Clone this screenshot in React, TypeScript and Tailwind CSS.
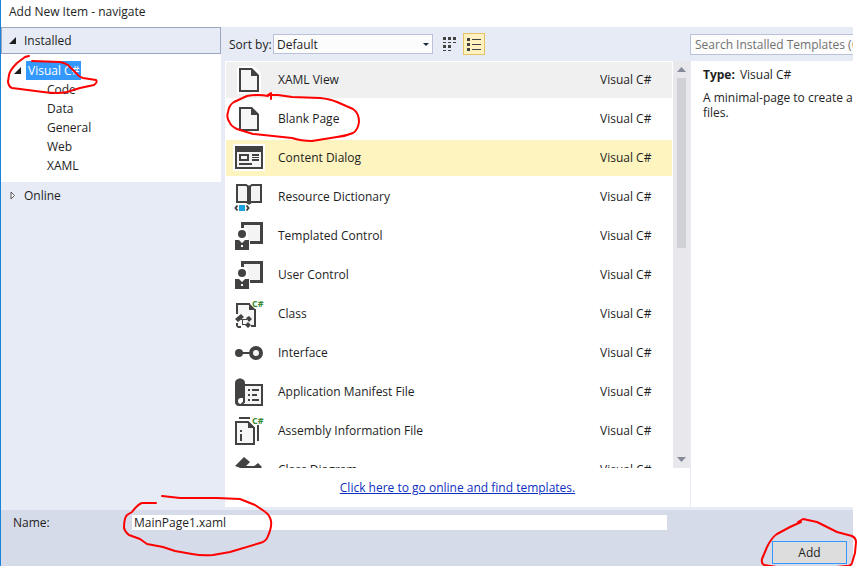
import React from 'react';

const ink = '#424242';

function PageIcon() {
  return (
    <svg width="32" height="32" viewBox="0 0 32 32" aria-hidden="true">
      <path d="M6 2h15l7 7v21H4V4z" fill="#fff" />
      <path d="M7 5h11.500L25 11.500V27H7z" fill="#f6f6f6" stroke={ink} strokeWidth="2" />
      <path d="M18 4l8 8h-8z" fill={ink} />
    </svg>
  );
}

function DialogIcon() {
  return (
    <svg width="32" height="32" viewBox="0 0 32 32" aria-hidden="true">
      <path d="M0 2h32v27H0z" fill="#fff" />
      <path d="M2 4h28v23H2z" fill={ink} />
      <path d="M4 10h24v15H4z" fill="#f4f4f4" />
      <path d="M6 12h10v7H6z" fill={ink} />
      <path d="M8 14h6v3H8z" fill="#f4f4f4" />
      <path d="M19 12h7v2h-7zM19 15h7v1h-7zM19 17h7v2h-7zM6 21h13v2H6z" fill={ink} />
    </svg>
  );
}

function DictionaryIcon() {
  return (
    <svg width="32" height="32" viewBox="0 0 32 32" aria-hidden="true">
      <path d="M4 4h9l3 2 3-2h9v17h-9l-3 1-3-1H4z" fill="#f4f4f4" stroke={ink} strokeWidth="2" />
      <path d="M14 4l2 1 2-1v18l-2 2-2-2z" fill={ink} />
      <path d="M0 23h19v9H0z" fill="#fff" />
      <path d="M14 22h4l-2 2z" fill={ink} />
      <path d="M4.500 24.500L2.500 27l2 2.500M13.500 24.500l2 2.500-2 2.500" fill="none" stroke={ink} strokeWidth="2" />
      <path d="M6 24h6v6H6z" fill="#1ba1e2" />
    </svg>
  );
}

function ControlIcon() {
  return (
    <svg width="32" height="32" viewBox="0 0 32 32" aria-hidden="true">
      <path d="M8 2h22v22H17v-3h10V5H11v3H8z" fill={ink} />
      <path d="M11 5h16v16H15V10l-4-2z" fill="#f4f4f4" />
      <circle cx="9" cy="14" r="6" fill="#fff" />
      <circle cx="9" cy="14" r="4" fill={ink} />
      <path d="M2 20h4l3 3 3-3h4v10H2z" fill={ink} />
      <path d="M8 25h2v2H8z" fill="#fff" />
    </svg>
  );
}

function SharpMark() {
  return (
    <text x="19" y="9" fill="#388a34" className="font-['Open_Sans',sans-serif] text-[9px] font-bold">C#</text>
  );
}

function ClassIcon() {
  return (
    <svg width="32" height="32" viewBox="0 0 32 32" className="overflow-visible" aria-hidden="true">
      <path d="M4 6h13l5 5v17H4z" fill="#f6f6f6" />
      <path d="M4 16V6h13M22 11v17h-4" fill="none" stroke={ink} strokeWidth="2" />
      <path d="M16 5l7 7h-7z" fill={ink} />
      <path d="M2 21l6-5 3 3-6 5zM13 20l3-2 3 3-3 3zM12 27l3-3 3 3-3 3zM3 25v3l2 2h3v-2H5v-3z" fill={ink} />
      <path d="M8 21.500h6M9.500 21v6M9 26.500h4" fill="none" stroke={ink} strokeWidth="1" />
      <SharpMark />
    </svg>
  );
}

function InterfaceIcon() {
  return (
    <svg width="32" height="32" viewBox="0 0 32 32" aria-hidden="true">
      <circle cx="6" cy="16" r="4" fill={ink} />
      <path d="M9 16h8" stroke={ink} strokeWidth="2" />
      <circle cx="23" cy="16" r="5" fill="#f8f8f8" stroke={ink} strokeWidth="4" />
    </svg>
  );
}

function ManifestIcon() {
  return (
    <svg width="32" height="32" viewBox="0 0 32 32" aria-hidden="true">
      <path d="M11 9h18v20H8z" fill="#f4f4f4" stroke={ink} strokeWidth="2" />
      <path d="M2 7c0-6 10-6 10 0v16L8 30H6c-3 0-4-2-4-4z" fill={ink} />
      <circle cx="8" cy="25" r="3" fill="#fff" />
      <path d="M8 22h3v6H8z" fill="#fff" />
      <path d="M11 22v4l-3 3" fill="none" stroke={ink} strokeWidth="2" />
      <path d="M15 13h2v2h-2zM19 13h7v2h-7zM15 18h2v2h-2zM19 18h5v2h-5zM15 23h2v2h-2zM19 23h7v2h-7z" fill={ink} />
    </svg>
  );
}

function AssemblyIcon() {
  return (
    <svg width="32" height="32" viewBox="0 0 32 32" className="overflow-visible" aria-hidden="true">
      <path d="M3 7h12l6 6v16H3z" fill="#f6f6f6" stroke={ink} strokeWidth="2" />
      <path d="M15 6v7h7zM6 2h11v2H6zM24 10h2v16h-2z" fill={ink} />
      <path d="M7 15h2v2H7zM7 19h2v7H7z" fill={ink} />
      <SharpMark />
    </svg>
  );
}

function DiagramIcon() {
  return (
    <svg width="32" height="32" viewBox="0 0 32 32" aria-hidden="true">
      <path d="M2 12l9-9 6 5-7 7z" fill={ink} />
      <path d="M10 12h14v2H10zM20 13l5-4 4 4-4 4z" fill={ink} />
    </svg>
  );
}

const templates = [
  { name: 'XAML View', icon: PageIcon, tone: 'bg-[#f0f0f0]' },
  { name: 'Blank Page', icon: PageIcon, tone: '' },
  { name: 'Content Dialog', icon: DialogIcon, tone: 'bg-[#fdf4bf]' },
  { name: 'Resource Dictionary', icon: DictionaryIcon, tone: '' },
  { name: 'Templated Control', icon: ControlIcon, tone: '' },
  { name: 'User Control', icon: ControlIcon, tone: '' },
  { name: 'Class', icon: ClassIcon, tone: '' },
  { name: 'Interface', icon: InterfaceIcon, tone: '' },
  { name: 'Application Manifest File', icon: ManifestIcon, tone: '' },
  { name: 'Assembly Information File', icon: AssemblyIcon, tone: '' },
  { name: 'Class Diagram', icon: DiagramIcon, tone: '' },
];

function OpenArrow() {
  return (
    <svg width="7" height="7" viewBox="0 0 7 7" className="shrink-0" aria-hidden="true">
      <path d="M7 0v7H0z" fill="#1e1e1e" />
    </svg>
  );
}

function Sidebar() {
  return (
    <nav className="w-56 shrink-0 pr-1" aria-label="Template categories">
      <button className="flex h-[27px] w-full items-center gap-2 border border-[#9ba7c0] px-[7px] text-left">
        <OpenArrow />
        Installed
      </button>
      <div className="h-32 bg-white pt-[7px]">
        <button className="flex h-[19px] items-center gap-[5px] pl-[13px]">
          <OpenArrow />
          <span className="bg-[#3399ff] px-[2px] leading-[19px] text-white">Visual C#</span>
        </button>
        <ul className="pl-[46px] leading-[19px]">
          {['Code', 'Data', 'General', 'Web', 'XAML'].map((label) => (
            <li key={label}>
              <button className="block">{label}</button>
            </li>
          ))}
        </ul>
      </div>
      <button className="flex h-[26px] w-full items-center gap-2 px-2 text-left">
        <svg width="7" height="9" viewBox="0 0 7 9" className="shrink-0" aria-hidden="true">
          <path d="M2 1v7l3.500-3.500z" fill="#fff" stroke="#555" />
        </svg>
        Online
      </button>
    </nav>
  );
}

function Toolbar() {
  return (
    <div className="flex h-[34px] items-center pl-1">
      <label htmlFor="sort" className="w-11 shrink-0 whitespace-nowrap">Sort by:</label>
      <div className="relative">
        <select
          id="sort"
          className="block h-5 w-40 appearance-none border border-[#b9c2d9] bg-[#fcfcfc] px-[3px] pt-px leading-[18px]"
        >
          <option>Default</option>
        </select>
        <svg width="6" height="3" viewBox="0 0 6 3" className="pointer-events-none absolute top-[9px] right-1" aria-hidden="true">
          <path d="M0 0h6L3 3z" fill="#1b293e" />
        </svg>
      </div>
      <button aria-label="Small icons" className="ml-1 flex h-[22px] w-[26px] items-center justify-center">
        <svg width="14" height="14" viewBox="0 0 14 14" aria-hidden="true">
          <path d="M0 0h3v3H0zM5 0h3v3H5zM10 0h3v3h-3zM0 8h3v3H0zM5 8h3v3H5z" fill={ink} />
          <path d="M0 5.500h3M5 5.500h3M10 5.500h3M0 13.500h3M5 13.500h3" stroke={ink} />
        </svg>
      </button>
      <button aria-label="Medium icons" className="flex h-[22px] w-[22px] items-center justify-center border border-[#e5c365] bg-[#fff2c0]">
        <svg width="14" height="13" viewBox="0 0 14 13" aria-hidden="true">
          <path d="M0 0h3v3H0zM0 5h3v3H0zM0 10h3v3H0z" fill={ink} />
          <path d="M5 1.500h9M5 6.500h9M5 11.500h9" stroke={ink} />
        </svg>
      </button>
    </div>
  );
}

function TemplateList() {
  return (
    <div className="flex h-[407px]">
      <ul className="flex min-w-0 flex-1 flex-col gap-[3px] overflow-hidden px-px pt-px">
        {templates.map(({ name, icon: Icon, tone }) => (
          <li key={name} className={`flex h-9 shrink-0 items-center pl-[7px] ${tone}`}>
            <Icon />
            <span className="ml-[13px] flex-1 pb-[2px]">{name}</span>
            <span className="w-[72px] pb-[2px]">Visual C#</span>
          </li>
        ))}
      </ul>
      <div className="flex w-[17px] flex-col items-center bg-[#e8e8ec] py-[6px]">
        <svg width="9" height="5" viewBox="0 0 9 5" aria-hidden="true">
          <path d="M0 5h9L4.500 0z" fill="#868999" />
        </svg>
        <div className="mt-[6px] h-[170px] w-[9px] bg-[#d0d1d7]" />
        <svg width="9" height="5" viewBox="0 0 9 5" className="mt-auto" aria-hidden="true">
          <path d="M0 0h9L4.500 5z" fill="#868999" />
        </svg>
      </div>
    </div>
  );
}

export default function App() {
  return (
    <div className="relative bg-white pr-1 font-['Open_Sans','Noto_Sans',sans-serif] text-[12px] leading-[15px] text-[#1e1e1e]">
      <div className="border-l border-[#1883d7]">
        <header className="h-[27px] px-2 pt-1 leading-4">Add New Item - navigate</header>
        <div className="flex bg-[#e6ebf5] pb-[3px]">
          <Sidebar />
          <main className="min-w-0 flex-1">
            <Toolbar />
            <div className="bg-white">
              <TemplateList />
              <div className="flex h-[39px] items-center justify-center">
                <a href="#online" className="text-[#0e2fbf] underline">Click here to go online and find templates.</a>
              </div>
            </div>
          </main>
          <aside className="flex w-[163px] shrink-0 flex-col">
            <div className="flex h-[34px] items-center overflow-hidden">
              <input
                aria-label="Search Installed Templates"
                placeholder="Search Installed Templates (Ctrl+E)"
                className="h-[21px] w-[240px] shrink-0 border border-[#b9c2d9] bg-[#fcfcfc] px-1 placeholder:text-[#717171]"
              />
            </div>
            <div className="ml-px flex-1 overflow-hidden bg-white pt-[6px] pl-3">
              <p><b className="mr-[5px]">Type:</b>Visual C#</p>
              <p className="mt-2 whitespace-nowrap">A minimal-page to create adding</p>
              <p>files.</p>
            </div>
          </aside>
        </div>
        <footer className="bg-[#d6dbe9] pt-[5px] pr-[6px] pb-[2px] pl-3">
          <div className="flex items-center">
            <label htmlFor="name" className="w-[119px] shrink-0">Name:</label>
            <input id="name" defaultValue="MainPage1.xaml" className="mr-[180px] h-[15px] min-w-0 flex-1 bg-white px-[2px]" />
          </div>
          <div className="mt-[11px] flex justify-end">
            <button className="h-[23px] w-[75px] border border-[#3399ff] bg-[#dddddd]">Add</button>
          </div>
        </footer>
      </div>
      <svg width="365" height="560" viewBox="0 0 365 560" className="pointer-events-none absolute top-0 left-0" fill="none" stroke="#f00" strokeWidth="2" strokeLinecap="round" strokeLinejoin="round" aria-hidden="true">
        <path d="M29 56L25 57L17 63Q10 70 9 75L8 82Q9 87 12 88L20 89L43 92Q58 94 67 92L80 88L94 85Q98 82 96 80L83 78Q79 77 77 74L68 65Q65 63 60 62L32 61" />
        <path d="M271 99L271 93L268 95L278 95L292 97L320 98Q330 99 337 102L353 109Q359 113 359 122Q358 130 353 133Q346 136 337 137L312 141Q301 141 292 138L253 134L237 129Q231 126 230 123Q226 118 228 112Q229 105 234 102L247 96Q258 94 268 96" />
        <path d="M156 503H142Q138 504 132 512L127 515Q124 518 124 528Q125 532 129 535L140 539L147 544L163 547L175 551L192 554Q202 556 213 555L230 552L260 543Q266 542 268 536Q272 527 271 521Q270 515 264 511L255 505L240 499L217 498H180L162 496" />
      </svg>
      <svg width="97" height="52" viewBox="0 0 97 52" className="pointer-events-none absolute right-0 -bottom-1" fill="none" stroke="#f00" strokeWidth="2" strokeLinecap="round" strokeLinejoin="round" aria-hidden="true">
        <path d="M41 4L38 4L43 1L57 4L77 14L92 18Q96 20 96 24L95 35L92 45Q91 48 86 48L57 51L37 49L17 49L4 47Q1 45 2 41L7 29Q12 19 17 16L30 9L41 4" />
      </svg>
    </div>
  );
}
